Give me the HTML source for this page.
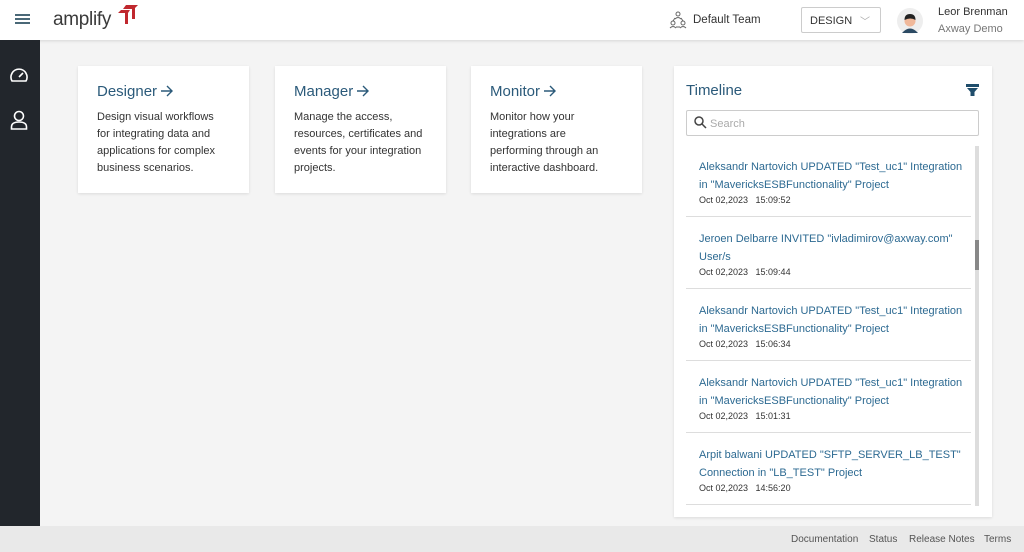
<!DOCTYPE html>
<html><head><meta charset="utf-8"><style>
*{box-sizing:border-box;margin:0;padding:0}
body{width:1024px;height:552px;overflow:hidden;background:#f4f4f4;font-family:"Liberation Sans",sans-serif;position:relative}
.hdr{position:absolute;left:0;top:0;width:1024px;height:40px;background:#fff;box-shadow:0 1px 3px rgba(0,0,0,.12)}
.side{position:absolute;left:0;top:40px;width:40px;height:486px;background:#22262c}
.foot{position:absolute;left:0;top:526px;width:1024px;height:26px;background:#e9e9e9;font-size:10px;color:#555}
.foot span{position:absolute;top:8px}
.card{position:absolute;top:66px;height:127px;width:171px;background:#fff;box-shadow:0 1px 3px rgba(0,0,0,.1);padding:17px 19px}
.card h3{font-weight:normal;font-size:15px;color:#2b5a7a;margin-bottom:8px;height:18px}
.card h3 svg{vertical-align:-1px;margin-left:3px}
.card p{font-size:11px;line-height:17px;color:#333;width:128px}
.tl{position:absolute;left:674px;top:66px;width:318px;height:451px;background:#fff;box-shadow:0 1px 3px rgba(0,0,0,.1)}
.item{position:absolute;left:12px;width:285px;border-bottom:1px solid #ddd;padding-left:13px}
.item a{display:block;color:#2d6a92;font-size:11px;line-height:17.5px}
.item .d{font-size:9px;color:#333;margin-top:1px}
</style></head><body>
<div class="hdr">
 <div style="position:absolute;left:15px;top:14px;width:15px;height:2px;background:#4a6877;box-shadow:0 4px 0 #4a6877,0 8px 0 #4a6877"></div>
 <div style="position:absolute;left:53px;top:9px;font-size:19px;color:#3a3a3a;letter-spacing:-0.3px">amplify</div>
 <svg style="position:absolute;left:118px;top:5px" width="20" height="20" viewBox="0 0 20 20"><path d="M0 8h7v11h3V8l2-3H3z" fill="#c0282e"/><path d="M5 4h9v10h3V3l3-3H8z" fill="#c0282e"/></svg>
 <svg style="position:absolute;left:669px;top:10px" width="18" height="20" viewBox="0 0 18 20" fill="none" stroke="#666" stroke-width="1"><circle cx="9" cy="4" r="2"/><path d="M6 9q3-3 6 0"/><circle cx="4" cy="13" r="2"/><circle cx="14" cy="13" r="2"/><path d="M1 18q3-3 6 0M11 18q3-3 6 0M6 8l-2 3M12 8l2 3M7 17h4"/></svg>
 <div style="position:absolute;left:693px;top:14px;font-size:11.5px;color:#333">Default Team</div>
 <div style="position:absolute;left:801px;top:7px;width:80px;height:26px;border:1px solid #ccc;border-radius:2px;font-size:11px;color:#333;padding:7px 0 0 8px">DESIGN<span style="position:absolute;left:58px;top:5px;color:#aaa;font-size:10px">﹀</span></div>
 <svg style="position:absolute;left:897px;top:8px" width="26" height="26" viewBox="0 0 26 26"><circle cx="13" cy="13" r="13" fill="#eee"/><path d="M5 25q8-9 16 0" fill="#2c4a63"/><circle cx="13" cy="13" r="5.5" fill="#f0b89a"/><path d="M7.5 12q0-6 5.5-6t5.5 6q-5-3-11 0z" fill="#222"/></svg>
 <div style="position:absolute;left:938px;top:6px;font-size:11px;color:#333">Leor Brenman</div>
 <div style="position:absolute;left:938px;top:23px;font-size:11px;color:#777">Axway Demo</div>
</div>
<div class="side">
 <svg style="position:absolute;left:9px;top:26px" width="20" height="18" viewBox="0 0 20 18" fill="none" stroke="#fff" stroke-width="1.6"><path d="M3 15a8 8 0 1 1 14 0z"/><path d="M10 11l4-4"/></svg>
 <svg style="position:absolute;left:10px;top:70px" width="18" height="20" viewBox="0 0 18 20" fill="none" stroke="#fff" stroke-width="1.6"><circle cx="9" cy="6" r="4.5"/><path d="M1.5 19v-2q0-5 7.5-5t7.5 5v2z"/></svg>
</div>
<div class="card" style="left:78px"><h3>Designer<svg width="13" height="12" viewBox="0 0 13 12" fill="none" stroke="#2b5a7a" stroke-width="1.4"><path d="M1 6h11M7 1l5 5-5 5"/></svg></h3><p>Design visual workflows for integrating data and applications for complex business scenarios.</p></div>
<div class="card" style="left:275px"><h3>Manager<svg width="13" height="12" viewBox="0 0 13 12" fill="none" stroke="#2b5a7a" stroke-width="1.4"><path d="M1 6h11M7 1l5 5-5 5"/></svg></h3><p style="width:136px">Manage the access, resources, certificates and events for your integration projects.</p></div>
<div class="card" style="left:471px"><h3>Monitor<svg width="13" height="12" viewBox="0 0 13 12" fill="none" stroke="#2b5a7a" stroke-width="1.4"><path d="M1 6h11M7 1l5 5-5 5"/></svg></h3><p style="width:118px">Monitor how your integrations are performing through an interactive dashboard.</p></div>
<div class="tl">
 <div style="position:absolute;left:12px;top:16px;font-size:15px;color:#2b5a7a">Timeline</div>
 <svg style="position:absolute;left:292px;top:18px" width="13" height="12" viewBox="0 0 13 12"><path d="M0 0h13v3H0zM1 4h11l-3.5 4v4h-4V8z" fill="#1f4d6b"/></svg>
 <div style="position:absolute;left:12px;top:44px;width:293px;height:26px;border:1px solid #ccc;border-radius:2px">
  <svg style="position:absolute;left:7px;top:5px" width="13" height="13" viewBox="0 0 13 13" fill="none" stroke="#444" stroke-width="1.5"><circle cx="5" cy="5" r="4"/><path d="M8 8l4 4"/></svg>
  <span style="position:absolute;left:23px;top:7px;font-size:11px;color:#aaa">Search</span></div>
 <div style="position:absolute;left:301px;top:80px;width:4px;height:360px;background:#ddd"></div>
 <div style="position:absolute;left:301px;top:174px;width:4px;height:30px;background:#888"></div>
 <div class="item" style="top:93px;height:58px"><a>Aleksandr Nartovich UPDATED "Test_uc1" Integration in "MavericksESBFunctionality" Project</a><div class="d">Oct 02,2023 &nbsp; 15:09:52</div></div>
 <div class="item" style="top:165px;height:58px"><a>Jeroen Delbarre INVITED "ivladimirov@axway.com" User/s</a><div class="d">Oct 02,2023 &nbsp; 15:09:44</div></div>
 <div class="item" style="top:237px;height:58px"><a>Aleksandr Nartovich UPDATED "Test_uc1" Integration in "MavericksESBFunctionality" Project</a><div class="d">Oct 02,2023 &nbsp; 15:06:34</div></div>
 <div class="item" style="top:309px;height:58px"><a>Aleksandr Nartovich UPDATED "Test_uc1" Integration in "MavericksESBFunctionality" Project</a><div class="d">Oct 02,2023 &nbsp; 15:01:31</div></div>
 <div class="item" style="top:381px;height:58px"><a>Arpit balwani UPDATED "SFTP_SERVER_LB_TEST" Connection in "LB_TEST" Project</a><div class="d">Oct 02,2023 &nbsp; 14:56:20</div></div>
</div>
<div class="foot"><span style="left:791px">Documentation</span><span style="left:869px">Status</span><span style="left:909px">Release Notes</span><span style="left:984px">Terms</span></div>
</body></html>
